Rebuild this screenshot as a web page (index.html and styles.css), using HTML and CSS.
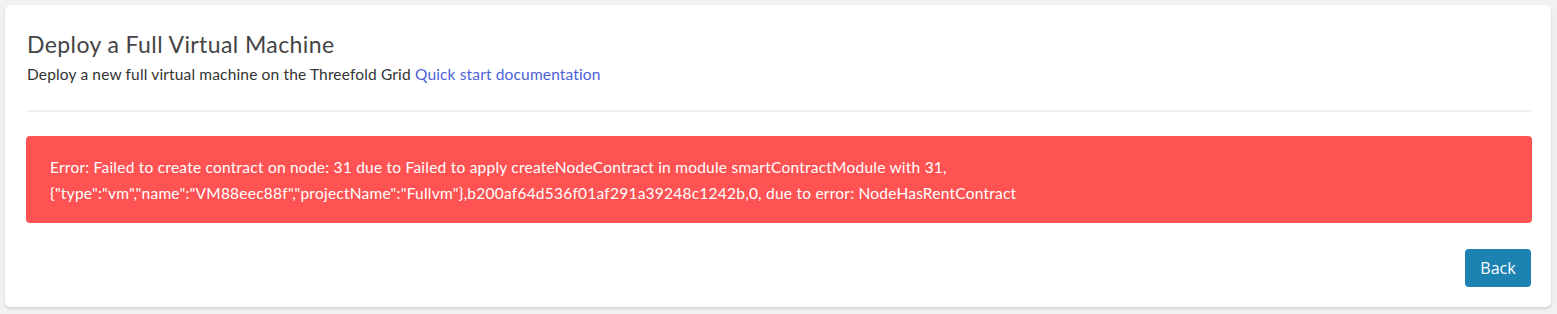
FILE: index.html
```html
<!DOCTYPE html>
<html lang="en">
<head>
<meta charset="utf-8">
<title>Deploy a Full Virtual Machine</title>
<link rel="stylesheet" href="styles.css">
</head>
<body>
  <div class="card">
    <div class="header">
      <h1 class="title">Deploy a Full Virtual Machine</h1>
      <p class="subtitle">Deploy a new full virtual machine on the Threefold Grid <a class="doc-link" href="#">Quick start documentation</a></p>
    </div>
    <hr class="divider">
    <div class="alert">
      Error: Failed to create contract on node: 31 due to Failed to apply createNodeContract in module smartContractModule with 31,<br>{"type":"vm","name":"VM88eec88f","projectName":"Fullvm"},b200af64d536f01af291a39248c1242b,0, due to error: NodeHasRentContract
    </div>
    <div class="actions">
      <button class="btn-back">Back</button>
    </div>
  </div>
</body>
</html>
```
FILE: styles.css
```css
html, body {
  margin: 0;
  padding: 0;
}
body {
  background: #f1f1f1;
  font-family: Lato, "Open Sans", sans-serif;
  padding: 5px 6px 7px 5px;
}
.card {
  background: #fff;
  border-radius: 5px;
  box-shadow: 0 2px 3px rgba(0,0,0,0.12), 0 0 1px rgba(0,0,0,0.06);
  padding: 25px 20px 20px 22px;
}
.title {
  margin: 0;
  font-size: 23px;
  font-weight: 400;
  letter-spacing: 0.4px;
  color: #444;
  line-height: 28px;
}
.subtitle {
  margin: 6px 0 0 0;
  font-size: 15.5px;
  letter-spacing: 0.15px;
  line-height: 20px;
  color: #333;
}
.doc-link {
  color: #4d5fd6;
  text-decoration: none;
}
.divider {
  border: 0;
  border-top: 2px solid #f0f0f0;
  margin: 26px 0 24px 0;
  height: 0;
}
.alert {
  background: #ff5252;
  color: #fff;
  border-radius: 4px;
  padding: 18px 24px 17px 24px;
  font-size: 15.5px;
  letter-spacing: 0.23px;
  line-height: 26px;
  margin-left: -1px;
  margin-right: -1px;
}
.actions {
  display: flex;
  justify-content: flex-end;
  margin-top: 26px;
}
.btn-back {
  font-family: "Open Sans", sans-serif;
  font-size: 16px;
  color: #fff;
  background: #1b82b1;
  border: 0;
  border-radius: 4px;
  width: 66px;
  height: 38px;
  padding: 0;
  cursor: pointer;
}
```
